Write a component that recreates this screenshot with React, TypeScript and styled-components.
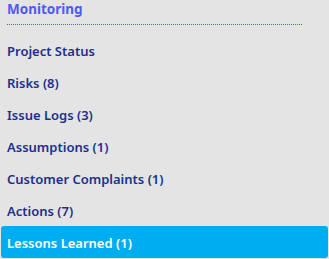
import { FC } from 'react';
import styled, { createGlobalStyle } from 'styled-components';

const GlobalStyle = createGlobalStyle`
  html, body {
    margin: 0;
    padding: 0;
    background: #e4e4e4;
  }
  body {
    font-family: 'Noto Sans', 'Open Sans', sans-serif;
  }
`;

const items = [
  { label: 'Project Status' },
  { label: 'Risks (8)' },
  { label: 'Issue Logs (3)' },
  { label: 'Assumptions (1)' },
  { label: 'Customer Complaints (1)' },
  { label: 'Actions (7)' },
  { label: 'Lessons Learned (1)', active: true },
];

const App: FC = () => {
  return (
    <>
      <GlobalStyle />
      <Panel>
        <Heading>Monitoring</Heading>
        <Menu>
          {items.map((item) => (
            <MenuItem key={item.label} active={item.active}>
              {item.label}
            </MenuItem>
          ))}
        </Menu>
      </Panel>
    </>
  );
};

const Panel = styled.div`
  width: 329px;
  height: 259px;
  box-sizing: border-box;
  padding: 0 1px 1px 1px;
  background: #e4e4e4;
  display: flex;
  flex-direction: column;
`;

const Heading = styled.div`
  margin: 0 26px 0 6px;
  padding: 1px 0 7px 0;
  font-size: 13.5px;
  font-weight: 700;
  line-height: 16px;
  color: #4f5bf0;
  border-bottom: 1px dotted #4f5bf0;
`;

const Menu = styled.ul`
  list-style: none;
  margin: 9px 0 0 0;
  padding: 0;
  display: flex;
  flex-direction: column;
`;

const MenuItem = styled.li<{ active?: boolean }>`
  height: 32px;
  display: flex;
  align-items: center;
  padding: 1px 6px 0 6px;
  box-sizing: border-box;
  border-radius: 3px;
  font-size: 13px;
  font-weight: 600;
  color: ${(props) => (props.active ? '#ffffff' : '#1b2f8f')};
  background: ${(props) => (props.active ? '#00aeef' : 'transparent')};
`;

export default App;
